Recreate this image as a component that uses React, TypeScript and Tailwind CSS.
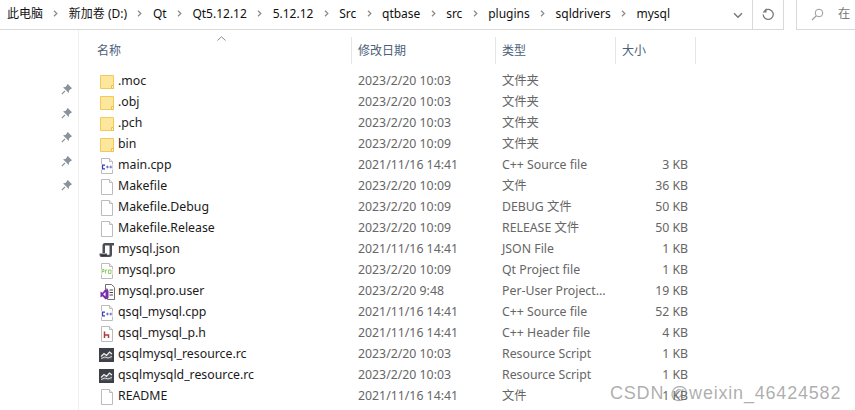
import React from "react";

const cjk = "font-['Noto_Sans','Noto_Sans_CJK_SC',sans-serif]";

type Kind = "folder" | "cpp" | "file" | "json" | "pro" | "vs" | "h" | "rc";

const rows: [string, string, string, string, Kind][] = [
  [".moc", "2023/2/20 10:03", "文件夹", "", "folder"],
  [".obj", "2023/2/20 10:03", "文件夹", "", "folder"],
  [".pch", "2023/2/20 10:03", "文件夹", "", "folder"],
  ["bin", "2023/2/20 10:09", "文件夹", "", "folder"],
  ["main.cpp", "2021/11/16 14:41", "C++ Source file", "3 KB", "cpp"],
  ["Makefile", "2023/2/20 10:09", "文件", "36 KB", "file"],
  ["Makefile.Debug", "2023/2/20 10:09", "DEBUG 文件", "50 KB", "file"],
  ["Makefile.Release", "2023/2/20 10:09", "RELEASE 文件", "50 KB", "file"],
  ["mysql.json", "2021/11/16 14:41", "JSON File", "1 KB", "json"],
  ["mysql.pro", "2023/2/20 10:09", "Qt Project file", "1 KB", "pro"],
  ["mysql.pro.user", "2023/2/20 9:48", "Per-User Project...", "19 KB", "vs"],
  ["qsql_mysql.cpp", "2021/11/16 14:41", "C++ Source file", "52 KB", "cpp"],
  ["qsql_mysql_p.h", "2021/11/16 14:41", "C++ Header file", "4 KB", "h"],
  ["qsqlmysql_resource.rc", "2023/2/20 10:03", "Resource Script", "1 KB", "rc"],
  ["qsqlmysqld_resource.rc", "2023/2/20 10:03", "Resource Script", "1 KB", "rc"],
  ["README", "2021/11/16 14:41", "文件", "1 KB", "file"],
];

const crumbs = ["此电脑", "新加卷 (D:)", "Qt", "Qt5.12.12", "5.12.12", "Src", "qtbase", "src", "plugins", "sqldrivers", "mysql"];

function Page({ children }: { children?: React.ReactNode }) {
  return (
    <svg width="16" height="16" viewBox="0 0 16 16">
      <path d="M2.5 .5H10.5L13.5 3.5V15.5H2.5Z" fill="#fff" stroke="#bcbcbc" />
      <path d="M10.5 .5V3.5H13.5" fill="#f0f0f0" stroke="#bcbcbc" />
      {children}
    </svg>
  );
}

function Icon({ kind }: { kind: Kind }) {
  if (kind === "folder")
    return (
      <svg width="16" height="16" viewBox="0 0 16 16">
        <path d="M1.5 1.5H14.5V14.5H1.5Z" fill="#fde69e" stroke="#f2cb57" />
        <path d="M12.5 11.5H14.5V14.5H12.5Z" fill="#fff2c4" stroke="#ecc24a" />
      </svg>
    );
  if (kind === "file") return <Page />;
  if (kind === "cpp")
    return (
      <Page>
        <rect x="1.5" y="6" width="12" height="6" fill="#fff" />
        <path d="M6 7.2H3.5V10.8H6" fill="none" stroke="#3a3fb0" strokeWidth="1.3" />
        <path d="M7 9H9.8M8.4 7.6V10.4M10.4 9H13.2M11.8 7.6V10.4" stroke="#5a60c8" strokeWidth="0.9" />
      </Page>
    );
  if (kind === "h")
    return (
      <Page>
        <path d="M5.5 5.5V12M5.5 9H9.5V12" fill="none" stroke="#b23a3a" strokeWidth="1.5" />
      </Page>
    );
  if (kind === "pro")
    return (
      <Page>
        <rect x="1.5" y="6" width="12" height="5.5" fill="#fff" />
        <path d="M3 10.5V6.5H5V8.5H3M6.5 10.5V7H8M9.5 7H12V10.5H9.5Z" fill="none" stroke="#86c65a" strokeWidth="0.9" />
      </Page>
    );
  if (kind === "json")
    return (
      <svg width="16" height="16" viewBox="0 0 16 16">
        <path d="M3.5 11V3.5Q3.5 1 6 1H15V3.5H13V12.5Q13 15 10.5 15H2.5Q.5 15 .5 12.8V11.5H8V12.8H10.5V3.5H6V11Z" fill="#4c5056" />
        <path d="M2 13H7.5V14H2.5Z" fill="#2f3236" />
      </svg>
    );
  if (kind === "vs")
    return (
      <svg width="16" height="16" viewBox="0 0 16 16">
        <path d="M6.5 .5H12.5L15.5 3.5V15.5H8.5V5H6.5Z" fill="#fff" stroke="#6f6f6f" />
        <path d="M10.5 6H14M10.5 8.5H14M10.5 11H14" stroke="#444" />
        <path d="M6.5 5L9.5 6.5V14L6.5 15.5L3.5 12.3L1.5 13.5V7.5L3.5 8.7Z" fill="#7a2fa8" />
        <path d="M6.5 8V12.5L4.2 10.2Z" fill="#fff" />
      </svg>
    );
  return (
    <svg width="16" height="16" viewBox="0 0 16 16">
      <rect x="0" y="1" width="15" height="14" fill="#3d4147" />
      <path d="M2.5 9.5L5.5 6L8 8L11 4.5L13 6.5V12.5H2.5Z" fill="#55595f" />
      <path d="M2 9.5L5 6.5L7.5 8.5L10.5 5L13 7" fill="none" stroke="#f0f0f0" strokeWidth="1.2" />
      <path d="M2 11.5L6 10L9 11L13 9.5" fill="none" stroke="#d8d8d8" strokeWidth="1" />
    </svg>
  );
}

function Pin() {
  return (
    <svg width="12" height="12" viewBox="0 0 12 12">
      <path d="M6.5 .8L11 5.3L9.8 5.9L8 7.6L7.8 10L2 4.2L4.4 4L6 2.2Z" fill="#8a939c" />
      <path d="M4 8L.8 11.2" stroke="#8a939c" strokeWidth="1.2" />
    </svg>
  );
}

function Chevron() {
  return (
    <svg width="5" height="7" viewBox="0 0 5 7" className="shrink-0">
      <path d="M1 .8L3.8 3.5L1 6.2" fill="none" stroke="#8d8d8d" strokeWidth="1.3" />
    </svg>
  );
}

function Head({ label, w, pad }: { label: string; w: string; pad: string }) {
  return (
    <div className={`${w} ${pad} h-[27px] shrink-0 border-r border-[#e5e5e5] flex items-center text-[12px] text-[#4c607a]`}>
      {label}
    </div>
  );
}

export default function App() {
  return (
    <div className={`${cjk} relative w-[855px] h-[410px] overflow-hidden bg-white flex flex-col text-[12.3px]`}>
      <div className="h-[30px] shrink-0 flex items-stretch">
        <div className="w-[753px] border-b border-r border-[#d9d9d9] flex items-center pl-[7px] pb-[2px] relative">
          <div className="flex items-center gap-[10.4px] text-[12px] text-[#111] whitespace-nowrap">
            {crumbs.map((c, i) => (
              <React.Fragment key={c}>
                {i > 0 && <Chevron />}
                <span>{c}</span>
              </React.Fragment>
            ))}
          </div>
          <svg width="10" height="7" viewBox="0 0 10 7" className="absolute right-[9px] top-[12px]">
            <path d="M1 1.2L5 5.2L9 1.2" fill="none" stroke="#7a7a7a" strokeWidth="1.5" />
          </svg>
        </div>
        <div className="w-[31px] border-b border-r border-[#d9d9d9] flex items-center justify-center">
          <svg width="12" height="13" viewBox="0 0 12 13">
            <path d="M3.5 2.2A5 5 0 1 1 1.2 6.5" fill="none" stroke="#7a7a7a" strokeWidth="1.3" />
            <path d="M5.5 0V4.5H1.5Z" fill="#7a7a7a" transform="translate(-1 0)" />
          </svg>
        </div>
        <div className="w-[12px]" />
        <div className="flex-1 border-b border-l border-[#d9d9d9] flex items-center pl-[14px] gap-[14px] overflow-hidden">
          <svg width="13" height="13" viewBox="0 0 13 13" className="shrink-0">
            <circle cx="8" cy="5" r="3.8" fill="none" stroke="#9a9a9a" strokeWidth="1" />
            <path d="M5.2 7.8L1 12" stroke="#9a9a9a" strokeWidth="1.2" />
          </svg>
          <span className="text-[#7a7a7a]">在</span>
        </div>
      </div>

      <div className="flex-1 flex min-h-0">
        <div className="w-[79px] shrink-0 border-r border-[#f0f0f0] flex flex-col items-end pt-[53px] pr-[5px] gap-[12px]">
          {[0, 1, 2, 3, 4].map((i) => (
            <Pin key={i} />
          ))}
        </div>
        <div className="flex-1 min-w-0 relative">
          <svg width="9" height="5" viewBox="0 0 9 5" className="absolute left-[138px] top-[6px]">
            <path d="M.5 4.5L4.5 .8L8.5 4.5" fill="none" stroke="#8a8a8a" />
          </svg>
          <div className="flex pt-[7px] h-[41px]">
            <Head label="名称" w="w-[273px]" pad="pl-[18px]" />
            <Head label="修改日期" w="w-[144px]" pad="pl-[6px]" />
            <Head label="类型" w="w-[120px]" pad="pl-[6px]" />
            <Head label="大小" w="w-[80px]" pad="pl-[6px]" />
          </div>
          <div className="flex flex-col">
            {rows.map(([name, date, type, size, kind]) => (
              <div key={name} className="h-[21px] shrink-0 flex items-center whitespace-nowrap">
                <div className="w-[273px] shrink-0 flex items-center pl-[20px] gap-[3px] text-[#1a1a1a]">
                  <Icon kind={kind} />
                  <span>{name}</span>
                </div>
                <div className="w-[144px] shrink-0 pl-[6px] text-[#666]">{date}</div>
                <div className="w-[120px] shrink-0 pl-[6px] text-[#666]">{type}</div>
                <div className="w-[72px] shrink-0 text-right text-[#666]">{size}</div>
              </div>
            ))}
          </div>
        </div>
      </div>

      <div className="absolute left-[610px] top-[382px] text-[18px] leading-[22px] tracking-[0.8px] text-[#77777799] font-['Liberation_Sans',sans-serif] whitespace-nowrap">
        CSDN @weixin_46424582
      </div>
    </div>
  );
}
